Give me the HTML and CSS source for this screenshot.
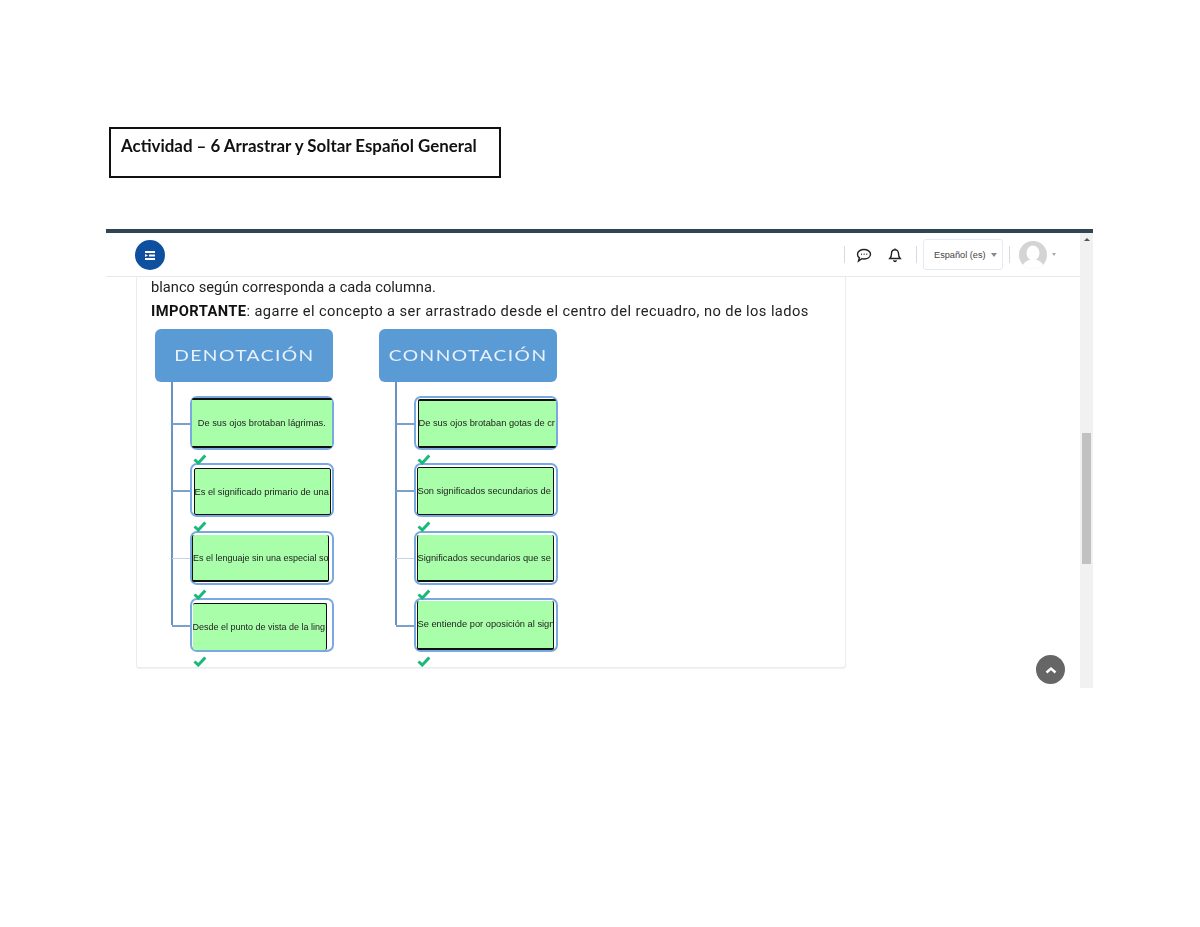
FILE: index.html
```html
<!DOCTYPE html>
<html lang="es">
<head>
<meta charset="utf-8">
<title>Actividad 6</title>
<link rel="stylesheet" href="styles.css">
</head>
<body>
<div class="title-box"><h1>Actividad – 6 Arrastrar y Soltar Español General</h1></div>

<section class="shot">
  <div class="viewport">
    <header class="topbar">
      <span class="logo">
        <svg width="12" height="11" viewBox="0 0 12 11"><path fill="#fff" d="M1 1h10v2H1zM5 4.500h6v2H5zM1 8h10v2H1z"/><path fill="#fff" d="M1 4l3 1.500L1 7z"/></svg>
      </span>
      <div class="tools">
        <span class="sep"></span>
        <svg class="tool" width="16" height="16" viewBox="0 0 16 16" fill="none" stroke="#222" stroke-width="1.400"><path d="M8 2.500c3.600 0 6.500 2 6.500 4.800S11.600 12 8 12c-.8 0-1.500-.1-2.200-.3L2.500 14l.9-3.200C2 9.900 1.500 8.700 1.500 7.300 1.500 4.500 4.400 2.500 8 2.500z"/><path d="M5 7.300h.8M7.700 7.300h.8M10.400 7.300h.8"/></svg>
        <svg class="tool" width="16" height="16" viewBox="0 0 16 16" fill="none" stroke="#222" stroke-width="1.400"><path d="M8 1.500v1.300M8 2.800c-2.300 0-3.500 1.700-3.500 3.900 0 2.400-.6 3.600-1.700 4.800h10.400c-1.100-1.200-1.700-2.400-1.700-4.800 0-2.200-1.200-3.900-3.500-3.900zM6.500 13.300c.4.800.9 1.200 1.500 1.200s1.100-.4 1.500-1.200"/></svg>
        <span class="sep"></span>
        <button class="lang">Español ‎(es)‎<i class="caret"></i></button>
        <span class="sep"></span>
        <svg class="avatar" width="28" height="28" viewBox="0 0 28 28"><circle cx="14" cy="14" r="14" fill="#d4d4d4"/><ellipse cx="14" cy="12" rx="6.500" ry="7.500" fill="#fff"/><path fill="#fff" d="M4 24c2-4 6-5.500 10-5.500S22 20 24 24c-2.500 2.500-6 4-10 4s-7.500-1.500-10-4z"/></svg>
        <i class="caret small"></i>
      </div>
    </header>

    <main class="card">
      <p class="line">blanco según corresponda a cada columna.</p>
      <p class="line wide"><strong>IMPORTANTE</strong>: agarre el concepto a ser arrastrado desde el centro del recuadro, no de los lados</p>
      <div class="columns">
        <div class="col">
          <h2 class="col-head"><span class="stretch">DENOTACIÓN</span></h2>
          <ul class="tree">
            <li class="node"><div class="fill d1 centered">De sus ojos brotaban lágrimas.</div><svg class="check" viewBox="0 0 14 11"><path d="M1.500 5.500l3.800 3.500 7-7.500"/></svg></li>
            <li class="node"><div class="fill d2">Es el significado primario de una</div><svg class="check" viewBox="0 0 14 11"><path d="M1.500 5.500l3.800 3.500 7-7.500"/></svg></li>
            <li class="node faint"><div class="fill d3">Es el lenguaje sin una especial so</div><svg class="check" viewBox="0 0 14 11"><path d="M1.500 5.500l3.800 3.500 7-7.500"/></svg></li>
            <li class="node"><div class="fill d4">Desde el punto de vista de la ling</div><svg class="check" viewBox="0 0 14 11"><path d="M1.500 5.500l3.800 3.500 7-7.500"/></svg></li>
          </ul>
        </div>
        <div class="col">
          <h2 class="col-head"><span class="stretch">CONNOTACIÓN</span></h2>
          <ul class="tree">
            <li class="node"><div class="fill c1">De sus ojos brotaban gotas de cr</div><svg class="check" viewBox="0 0 14 11"><path d="M1.500 5.500l3.800 3.500 7-7.500"/></svg></li>
            <li class="node"><div class="fill c2">Son significados secundarios de</div><svg class="check" viewBox="0 0 14 11"><path d="M1.500 5.500l3.800 3.500 7-7.500"/></svg></li>
            <li class="node faint"><div class="fill c3">Significados secundarios que se</div><svg class="check" viewBox="0 0 14 11"><path d="M1.500 5.500l3.800 3.500 7-7.500"/></svg></li>
            <li class="node"><div class="fill c4">Se entiende por oposición al sign</div><svg class="check" viewBox="0 0 14 11"><path d="M1.500 5.500l3.800 3.500 7-7.500"/></svg></li>
          </ul>
        </div>
      </div>
    </main>

    <a class="to-top" href="#"><svg width="12" height="8" viewBox="0 0 12 8" fill="none" stroke="#fff" stroke-width="2.400"><path d="M1.500 6.500L6 2.500l4.500 4"/></svg></a>
  </div>

  <div class="scrollbar">
    <span class="arrow"></span>
    <span class="thumb"></span>
  </div>
</section>
</body>
</html>
```
FILE: styles.css
```css
* { box-sizing: border-box; }
html, body { margin: 0; padding: 0; background: #fff; }
body { height: 927px; overflow: hidden; padding-top: 127px; font-family: "Liberation Sans", Arial, sans-serif; }

.title-box {
  width: 392px; height: 51px; margin-left: 109px;
  border: 2px solid #111; padding: 5px 10px;
  filter: blur(.3px);
}
.title-box h1 {
  margin: 0; font: 700 16.900px/24px Lato, sans-serif; color: #111; white-space: nowrap;
}

.shot {
  display: flex; width: 987px; height: 459px; margin: 51px 0 0 106px;
  border-top: 4px solid #2f4654; filter: blur(.5px);
}
.viewport { position: relative; flex: 1; display: flex; flex-direction: column; min-width: 0; }

.topbar {
  display: flex; align-items: center; justify-content: space-between;
  height: 44px; padding: 0 24px 0 29px; border-bottom: 1px solid #e8e8e8; flex: none;
}
.logo {
  display: flex; align-items: center; justify-content: center;
  width: 30px; height: 30px; border-radius: 50%; background: #0f4f9f; margin-top: 1px;
}
.tools { display: flex; align-items: center; height: 100%; }
.sep { width: 1px; height: 17px; background: #d9d9d9; }
.tool { margin-left: 11px; }
.tool + .tool { margin-left: 15px; }
.tool + .sep { margin-left: 13px; }
.sep + .lang { margin-left: 6px; }
.lang {
  display: flex; align-items: center; gap: 5px;
  width: 80px; height: 31px; padding: 0 0 0 10px;
  background: #fff; border: 1px solid #e6e8f2; border-radius: 3px;
  font: 9.200px "Liberation Sans", Arial, sans-serif; color: #444; white-space: nowrap;
}
.lang + .sep { margin-left: 6px; }
.sep + .avatar { margin-left: 9px; }
.caret { display: block; border: 3px solid transparent; border-top: 4px solid #888; border-bottom: 0; }
.caret.small { margin-left: 5px; border-width: 3px 2.500px 0; border-top-color: #aaa; }

.card {
  width: 710px; height: 391px; margin-left: 30px; overflow: hidden; flex: none;
  border: 1px solid #ececec; border-top: 0; border-radius: 0 0 3px 3px;
  box-shadow: 0 1px 1px rgba(0,0,0,.06);
  padding: 0 0 0 14px; color: #222;
}
.line { margin: 0 0 4px; font-family: Roboto, sans-serif; font-size: 14.700px; line-height: 20px; white-space: nowrap; }
.wide { letter-spacing: .4px; }
.line strong { color: #111; }

.columns { display: flex; gap: 46px; margin: 8px 0 0 4px; }
.col { width: 178px; }
.col-head {
  display: flex; align-items: center; justify-content: center; height: 53px; margin: 0; padding-bottom: 2px;
  background: #5b9bd5; border-radius: 6px;
  font: 400 16px Lato, sans-serif; letter-spacing: 1.200px; color: #e9f1fa;
}
.stretch { display: inline-block; transform: scaleX(1.200); }

.tree {
  position: relative; list-style: none; margin: 0; padding: 14px 0 0 35px;
  display: grid; gap: 13.400px; grid-auto-rows: 54px; width: 180px;
}
.tree::before {
  content: ""; position: absolute; left: 16px; top: 0; bottom: 27px; width: 2px; background: #6a93c4;
}
.node {
  position: relative; display: flex; width: 144px;
  border: 2px solid #7aa8e0; border-radius: 7px; background: #fff;
}
.node::before {
  content: ""; position: absolute; left: -20px; top: 50%; width: 18px; height: 1.500px; background: #7ba0cc;
}
.node.faint::before { background: #c3d3e6; }

.fill {
  flex: 1; min-width: 0; overflow: hidden; white-space: nowrap;
  display: flex; align-items: center;
  background: #a9ffa9; border: 0 solid #111; border-radius: 2px;
  font-size: 9.300px; color: #222;
}
.centered { justify-content: center; }
.d1 { margin: 0 .5px .5px 0; border-width: 2px 0; }
.d2 { margin: 2.500px 1.500px 0 1.500px; border-width: 1.500px; }
.d3 { margin: 2.500px 3.500px .5px 0; border-width: 0 1.500px 2px; font-size: 9px; }
.d4 { margin: 2.500px 5.500px 0 .5px; border-width: 1.500px 1.500px 0 0; font-size: 9px; }
.c1 { margin: .5px .5px .5px 1.500px; border-width: 2px 0 2px 1px; }
.c2 { margin: 1.500px 2.500px 0 .5px; border-width: 1.500px; }
.c3 { margin: 2.500px 2.500px .5px .5px; border-width: 0 1.500px 2px; }
.c4 { margin: .5px 2.500px .5px .5px; border-width: 0 1.500px 2px; }

.check {
  position: absolute; left: .5px; top: 56px; width: 14px; height: 11px; z-index: 1;
  fill: none; stroke: #19b97a; stroke-width: 3;
}

.to-top {
  position: absolute; left: 930px; top: 422px;
  display: flex; align-items: center; justify-content: center;
  width: 29px; height: 29px; border-radius: 50%; background: #666;
}

.scrollbar { position: relative; width: 13px; background: #f1f1f1; flex: none; }
.arrow {
  position: absolute; left: 4px; top: 5px;
  border: 3px solid transparent; border-bottom: 3px solid #555; border-top: 0;
}
.thumb { position: absolute; left: 2px; top: 200px; width: 9px; height: 131px; background: #c1c1c1; }
```
